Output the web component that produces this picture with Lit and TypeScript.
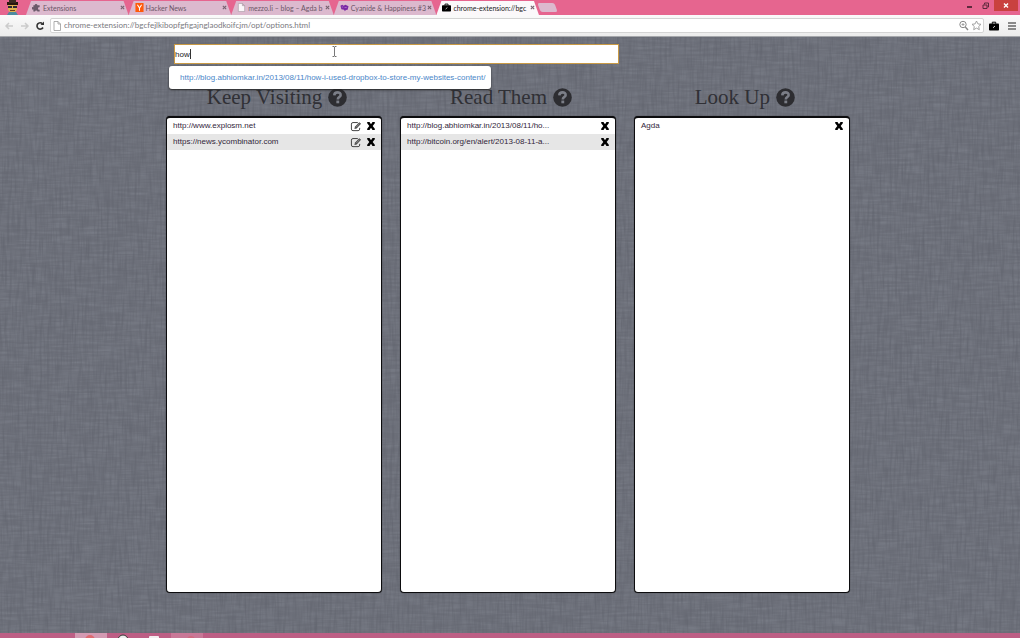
import { LitElement, html, css, svg, nothing } from "lit";
import { customElement, property, state } from "lit/decorators.js";
import { classMap } from "lit/directives/class-map.js";

const puzzle = svg`<svg viewBox="0 0 10 10"><path fill="#6b5a6a" d="M3 2.500a1.500 1.500 0 1 1 3 0h2.500v2.300a1.300 1.300 0 1 0 0 2.400V9.500H6a1.300 1.300 0 0 0-2.600 0H1.500V7A1.300 1.300 0 1 1 1.500 4.600V2.500z"/></svg>`;
const yc = svg`<svg viewBox="0 0 10 10"><rect width="9" height="10" x=".5" fill="#ff5a0a"/><path d="M2.700 2 5 5.600 7.300 2M5 5.400V8.500" stroke="#fff" stroke-width="1.200" fill="none"/></svg>`;
const sheet = svg`<svg viewBox="0 0 10 10"><path fill="#fbf6f9" stroke="#a59aa3" stroke-width=".7" d="M1.500.5H6l2.500 2.500v6.500h-7zM6 .5V3h2.500"/></svg>`;
const comic = svg`<svg viewBox="0 0 10 10"><path fill="#7a2aa6" d="M.5 3l2-1 1.500 1 2-1 3.500 1.500-1 4-2 .2-1 1.500-1-1.700-3-.5z"/><path stroke="#c79ad8" stroke-width=".6" d="M2 4.500h1.500M5 5h2.500"/></svg>`;
const bag = svg`<svg viewBox="0 0 10 10"><path fill="none" stroke="#000" d="M3.300 2.800V1.200h3.400v1.600"/><rect y="2.500" width="10" height="7" rx=".8"/><path stroke="#fff" stroke-width=".8" d="M4 6.800 6 5"/></svg>`;

const icons = {
  help: svg`<svg viewBox="0 0 20 20"><circle cx="10" cy="10" r="9.800" fill="#2d2d31"/><path d="M6.600 7.700C6.800 3.600 13.500 3.700 13.300 7.500c-.1 2-3 2.200-3 4.500" fill="none" stroke="#7b7e87" stroke-width="2.700"/><rect x="8.800" y="13.200" width="3" height="2.900" fill="#7b7e87"/></svg>`,
  edit: svg`<svg viewBox="0 0 12 12"><path d="M8 1.700H2.700Q1 1.700 1 3.400v5.400q0 1.700 1.700 1.700h5.600Q10 10.500 10 8.800V7.500" fill="none" stroke="#333"/><path d="M4.300 8.600 4.800 6.400 9.600 1.300 11.500 3 6.700 8.100z" fill="#444"/><path d="m6 7 4-4.200" stroke="#ddd" stroke-width=".6"/></svg>`,
  cross: svg`<svg viewBox="0 0 10 10"><path d="M1.200 1h2.300L5 3.200 6.500 1h2.300v1.300L6.700 5l2.100 2.700V9H6.500L5 6.800 3.500 9H1.200V7.700L3.300 5 1.200 2.300z"/></svg>`,
};

interface Tab { title: string; icon: unknown; active?: boolean }

@customElement("browser-bar")
class BrowserBar extends LitElement {
  static styles = css`
    :host { display: block; font-family: "Lato", sans-serif; }
    button { border: 0; padding: 0; background: none; display: flex; align-items: center; justify-content: center; }
    svg { display: block; width: 100%; height: 100%; }
    .strip { display: flex; height: 15px; background: #e6658f; overflow: hidden; }
    .avatar { width: 26px; height: 15px; padding-left: 5px; box-sizing: border-box; flex: none; }
    .avatar svg { width: 15px; }
    .tabs { display: flex; flex: 0 1 513px; min-width: 0; }
    .tab { flex: 1 1 0; min-width: 0; display: flex; align-items: center; gap: 2px; padding: 0 4px 0 6px; color: #6b5666; background: #dcb9ce;
      clip-path: polygon(5px 1px, calc(100% - 5px) 1px, 100% 100%, 0 100%); font-size: 7px; line-height: 14px; }
    .tab.active { background: #fbf8fa; color: #222; }
    .fav { width: 9px; height: 9px; flex: none; }
    .title { flex: 1; min-width: 0; white-space: nowrap; }
    .close { width: 5px; height: 5px; flex: none; }
    .new { width: 17px; height: 9px; margin-top: 3px; background: #dcb9ce; border-radius: 2px; transform: skewX(20deg); }
    .window { margin-left: auto; display: flex; }
    .window button { width: 16px; height: 11px; }
    .window .shut { width: 24px; background: #c9413f; margin: 0 2px 0 1px; }
    .tools { display: flex; align-items: center; height: 22px; box-sizing: border-box; background: linear-gradient(#fafafa, #ececec); border-bottom: 1px solid #a5a7ab; padding: 0 4px; }
    .nav { width: 15px; height: 12px; }
    .address { flex: 1; display: flex; align-items: center; height: 15px; box-sizing: border-box; border: 1px solid #d4d4d4; border-radius: 2px; background: #fff; margin: 0 3px 0 1px; padding: 0 1px; gap: 2px; }
    .address input { flex: 1; min-width: 0; border: 0; padding: 0; outline: 0; background: none; font: 8px/13px "Lato", sans-serif; color: #7a7a80; }
    .page { width: 10px; height: 10px; }
    .address button { width: 11px; height: 11px; }
    .ext { width: 10px; height: 10px; margin: 0 9px 0 2px; }
    .menu { width: 8px; height: 10px; }
  `;
  @property({ attribute: false }) tabs: Tab[] = [];
  @property() url = "";

  render() {
    return html`
      <div class="strip">
        <div class="avatar"><svg viewBox="0 0 15 15"><path d="M2 2h11v3H2z" fill="#28180f"/><path d="M4 0h7v3H4z" fill="#3b2a20"/><path d="M3 5h9v5l-3 3H6L3 10z" fill="#dfb04f"/><path d="M3 6h4v2H3zM8 6h4v2H8z" fill="#2b2b35"/><path d="M5 10h5v1H5z" fill="#6f3b1e"/><path d="M2 15l2-3h7l2 3z" fill="#4d8aa0"/></svg></div>
        <div class="tabs" role="tablist">
          ${this.tabs.map((t) => html`<div role="tab" aria-selected=${t.active ? "true" : "false"} class=${classMap({ tab: true, active: !!t.active })}>
            <span class="fav">${t.icon}</span><span class="title">${t.title}</span>
            <button class="close" aria-label="Close tab"><svg viewBox="0 0 6 6"><path d="M1 1l4 4M5 1 1 5" stroke="#76606f" stroke-width="1.300"/></svg></button>
          </div>`)}
        </div>
        <button class="new" aria-label="New tab"></button>
        <div class="window">
          <button aria-label="Minimize"><svg viewBox="0 0 14 11"><path d="M5 7h5" stroke="#3d1c29" stroke-width="1.600"/></svg></button>
          <button aria-label="Restore"><svg viewBox="0 0 14 11"><path d="M5 5h4v3.500H5zM6.500 4.500V3h4v4H9.500" fill="none" stroke="#5d2a3d"/></svg></button>
          <button class="shut" aria-label="Close window"><svg viewBox="0 0 24 11"><path d="M10 3.500l4 4M14 3.500l-4 4" stroke="#fff" stroke-width="1.400"/></svg></button>
        </div>
      </div>
      <div class="tools">
        <button class="nav" aria-label="Back"><svg viewBox="0 0 15 12"><path d="M9 6H2M5 3 2 6l3 3" fill="none" stroke="#ccc" stroke-width="1.500"/></svg></button>
        <button class="nav" aria-label="Forward"><svg viewBox="0 0 15 12"><path d="M2 6h7M6 3l3 3-3 3" fill="none" stroke="#ccc" stroke-width="1.500"/></svg></button>
        <button class="nav" aria-label="Reload"><svg viewBox="0 0 15 12"><path d="M8.500 3.700A3.200 3.200 0 1 0 9 7.500" fill="none" stroke="#333" stroke-width="1.600"/><path d="M10 1.500V5H6.500z" fill="#333"/></svg></button>
        <div class="address">
          <span class="page"><svg viewBox="0 0 10 10"><path fill="#fff" stroke="#999" stroke-width=".8" d="M2 .5h4l2.500 2.500v6.500H2zM6 .5V3h2.500"/></svg></span>
          <input aria-label="Address" .value=${this.url} />
          <button aria-label="Zoom"><svg viewBox="0 0 11 11"><circle cx="5" cy="4.500" r="3.200" fill="none" stroke="#888"/><path d="M7.300 7 10 10" stroke="#888" stroke-width="1.400"/><path d="M3.500 4.500h3M5 3v3" stroke="#888" stroke-width=".7"/></svg></button>
          <button aria-label="Bookmark"><svg viewBox="0 0 11 11"><path d="m5.500 1 1.400 2.900 3.100.4-2.300 2.200.6 3.200-2.800-1.600-2.800 1.600.6-3.200L1 4.300l3.100-.4z" fill="#fff" stroke="#999" stroke-width=".9"/></svg></button>
        </div>
        <button class="ext" aria-label="Extension">${bag}</button>
        <button class="menu" aria-label="Menu"><svg viewBox="0 0 8 10"><path d="M0 2h8M0 5h8M0 8h8" stroke="#666" stroke-width="1.700"/></svg></button>
      </div>`;
  }
}

@customElement("link-column")
class LinkColumn extends LitElement {
  static styles = css`
    :host { display: flex; flex-direction: column; min-width: 0; }
    button { border: 0; padding: 0; background: none; flex: none; }
    svg { display: block; width: 100%; height: 100%; }
    .head { display: flex; align-items: center; justify-content: center; gap: 6px; height: 28px; padding: 0 0 5px 6px; }
    h2 { margin: 0; font: 21px/28px "Liberation Serif", serif; color: #303035; white-space: nowrap; }
    .help { width: 19px; height: 19px; }
    .list { flex: 1; list-style: none; margin: 0; padding: 0; background: #fff; border: 1px solid #0c0c0e; border-top-width: 2px; border-radius: 4px; overflow: hidden; box-shadow: 0 0 1px #222; }
    .row { display: flex; align-items: center; gap: 4px; height: 16px; padding: 0 5px 0 6px; }
    .row:nth-child(even) { background: #e6e6e6; }
    a { flex: 1; min-width: 0; white-space: nowrap; color: #32263a; text-decoration: none; font: 8px/16px "Liberation Sans", sans-serif; }
    .edit { width: 12px; height: 11px; }
    .remove { width: 10px; height: 10px; }
  `;
  @property() heading = "";
  @property({ attribute: false }) items: string[] = [];
  @property({ type: Boolean }) editable = false;

  render() {
    return html`
      <div class="head"><h2>${this.heading}</h2><button class="help" aria-label="Help">${icons.help}</button></div>
      <ul class="list">
        ${this.items.map((i) => html`<li class="row"><a href="#">${i}</a>
          ${this.editable ? html`<button class="edit" aria-label="Edit">${icons.edit}</button>` : nothing}
          <button class="remove" aria-label="Remove">${icons.cross}</button></li>`)}
      </ul>`;
  }
}

@customElement("app-root")
class AppRoot extends LitElement {
  static styles = css`
    :host { display: flex; flex-direction: column; min-height: 100vh; background: #6c6f79; }
    main { position: relative; flex: 1; display: flex; flex-direction: column; padding: 7px 4px 40px 0; }
    .linen { position: absolute; inset: 0; width: 100%; height: 100%; opacity: 0.5; }
    .content { position: relative; flex: 1; display: flex; flex-direction: column; width: 67.3%; margin: 0 auto; }
    .search { position: relative; width: 65%; margin-left: 8px; }
    .search input { display: block; width: 100%; height: 20px; box-sizing: border-box; border: 1px solid #c99a45; padding: 0; outline: 0; background: #fff; color: #222; font: 8px/18px "Liberation Sans", sans-serif; }
    .caret { position: absolute; left: 16px; top: 5px; width: 1px; height: 10px; background: #333; }
    .pointer { position: absolute; left: 158px; top: 2px; width: 5px; height: 11px; }
    .suggest { position: absolute; z-index: 1; left: -5px; top: 22px; height: 23px; padding: 0 6px 0 11px; background: #fff; border-radius: 3px; box-shadow: 0 1px 2px #222; white-space: nowrap; }
    .suggest a { display: block; color: #4a86c8; text-decoration: none; font: 8px/24px "Liberation Sans", sans-serif; }
    .columns { flex: 1; display: grid; grid-template-columns: repeat(3, minmax(0, 1fr)); gap: 18px; margin-top: 19px; }
    footer { display: flex; height: 5px; overflow: hidden; background: #bd5f85; }
    .task { width: 32px; height: 5px; }
    .task.open { background: #d39ab2; }
    .task.dim { background: #c87897; }
    .task svg { display: block; width: 100%; height: 100%; }
    .start { width: 75px; }
  `;
  @state() private query = "how";
  private tabs: Tab[] = [
    { title: "Extensions", icon: puzzle },
    { title: "Hacker News", icon: yc },
    { title: "mezzo.li – blog – Agda b", icon: sheet },
    { title: "Cyanide & Happiness #3", icon: comic },
    { title: "chrome-extension://bgc", icon: bag, active: true },
  ];

  render() {
    return html`
      <browser-bar .tabs=${this.tabs} url="chrome-extension://bgcfejlkibopfgfigajnglaodkoifcjm/opt/options.html"></browser-bar>
      <main>
        <svg class="linen" aria-hidden="true">
          <filter id="h" x="0" y="0" width="100%" height="100%" color-interpolation-filters="sRGB"><feTurbulence type="fractalNoise" baseFrequency="0.04 0.4" numOctaves="2" seed="4"/><feColorMatrix values="0 0 0 0 .56  0 0 0 0 .58  0 0 0 0 .62  1.200 0 0 0 -.4"/></filter>
          <filter id="v" x="0" y="0" width="100%" height="100%" color-interpolation-filters="sRGB"><feTurbulence type="fractalNoise" baseFrequency="0.4 0.04" numOctaves="2" seed="9"/><feColorMatrix values="0 0 0 0 .32  0 0 0 0 .33  0 0 0 0 .37  1.200 0 0 0 -.45"/></filter>
          <rect width="100%" height="100%" filter="url(#h)"/><rect width="100%" height="100%" filter="url(#v)"/>
        </svg>
        <div class="content">
          <div class="search">
            <input aria-label="Search links" .value=${this.query} @input=${(e: Event) => (this.query = (e.target as HTMLInputElement).value)} />
            <span class="caret"></span>
            <svg class="pointer" viewBox="0 0 5 11"><path d="M.5.500h1.500l.5.500.5-.5h1.500M2.500 1v9M.5 10.500H2l.5-.5.500.5h1.500" fill="none" stroke="#555" stroke-width=".8"/></svg>
            <div class="suggest"><a href="#">http://blog.abhiomkar.in/2013/08/11/how-i-used-dropbox-to-store-my-websites-content/</a></div>
          </div>
          <div class="columns">
            <link-column heading="Keep Visiting" editable .items=${["http://www.explosm.net", "https://news.ycombinator.com"]}></link-column>
            <link-column heading="Read Them" .items=${["http://blog.abhiomkar.in/2013/08/11/ho...", "http://bitcoin.org/en/alert/2013-08-11-a..."]}></link-column>
            <link-column heading="Look Up" .items=${["Agda"]}></link-column>
          </div>
        </div>
      </main>
      <footer>
        <span class="start"><svg width="75" height="5" viewBox="0 0 75 5"><circle cx="20" cy="7" r="4" fill="#d88a70"/></svg></span>
        <span class="task open"><svg viewBox="0 0 32 5"><circle cx="15" cy="7" r="5" fill="#dd6a70"/></svg></span>
        <span class="task"><svg viewBox="0 0 32 5"><circle cx="16" cy="7" r="5" fill="#eee" stroke="#333"/></svg></span>
        <span class="task"><svg viewBox="0 0 32 5"><rect x="10" y="3" width="10" height="4" rx="1" fill="#f4eef0"/></svg></span>
        <span class="task dim"><svg viewBox="0 0 32 5"><circle cx="20" cy="7" r="4" fill="#cf6a80"/></svg></span>
      </footer>`;
  }
}
